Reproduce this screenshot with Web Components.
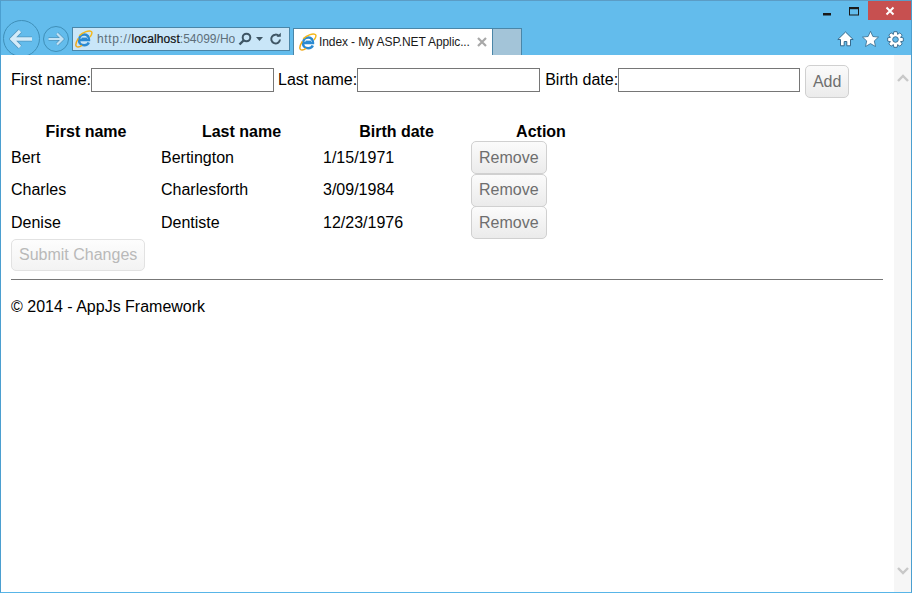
<!DOCTYPE html>
<html>
<head>
<meta charset="utf-8">
<title>Index - My ASP.NET Application</title>
<style>
    html, body { margin: 0; height: 100%; overflow: hidden; }
</style>
</head>
<body>
<ie-window>
    <app-form></app-form>
    <person-table></person-table>
    <app-button disabled>Submit Changes</app-button>
    <app-footer>© 2014 - AppJs Framework</app-footer>
</ie-window>

<script>
const IE_LOGO = `
<svg width="18" height="18" viewBox="0 0 18 18">
    <path d="M5 10h9c.3-3.200-1.700-5.400-4.600-5.400C6.300 4.600 4 7 4 10.200c0 3 2.200 5.100 5.300 5.100 2.200 0 3.800-1 4.500-2.700" fill="none" stroke="#2b8ad2" stroke-width="2.500"/>
    <path d="M6.500 8.300h5.500" stroke="#2b8ad2" stroke-width="1.400"/>
    <path d="M4.200 5.800C8.200 1.800 14.300 0 16.300 1.500c1.400 1.100-.1 3.900-1.300 5.500" fill="none" stroke="#f4b81c" stroke-width="1.500"/>
    <path d="M3.300 8.300C1.200 11.800.2 15.300 1.500 16.500c1.200 1 3.600.3 5.600-1.100" fill="none" stroke="#f0a818" stroke-width="1.500"/>
</svg>`;

// 8 tooth gear for the tools button
function gearPath(cx, cy, outer, inner) {
    let d = '';
    for (let i = 0; i < 8; i++) {
        const a = i * Math.PI / 4;
        const pts = [[-0.42, inner], [-0.2, outer], [0.2, outer], [0.42, inner]];
        pts.forEach(p => {
            const x = cx + p[1] * Math.sin(a + p[0]);
            const y = cy - p[1] * Math.cos(a + p[0]);
            d += (d ? 'L' : 'M') + x.toFixed(2) + ' ' + y.toFixed(2);
        });
    }
    return d + 'Z';
}

class IeWindow extends HTMLElement {
    constructor() {
        super();
        this.attachShadow({ mode: 'open' });
        this.shadowRoot.innerHTML = `
        <style>
            :host {
                display: flex;
                flex-direction: column;
                box-sizing: border-box;
                width: 912px;
                height: 593px;
                border: 1px solid #4b9fd0;
                border-top-color: #5b9cc5;
                border-bottom-color: #58b5e8;
                background: #fff;
                color: #000;
                font: 16px "Liberation Sans", Arial, sans-serif;
            }
            .main {
                flex: 1;
                display: flex;
                min-height: 0;
            }
            .page {
                flex: 1;
                padding: 10px 11px 0 10px;
            }
            .scrollbar {
                width: 17px;
                background: #f6f6f6;
                display: flex;
                flex-direction: column;
                justify-content: space-between;
                align-items: center;
                padding: 19px 0 17px;
                box-sizing: border-box;
            }
        </style>
        <ie-chrome></ie-chrome>
        <div class="main">
            <div class="page"><slot></slot></div>
            <div class="scrollbar">
                <svg width="12" height="8" viewBox="0 0 12 8"><path d="M1 7l5-5 5 5" fill="none" stroke="#c8c8c8" stroke-width="2.400"/></svg>
                <svg width="12" height="8" viewBox="0 0 12 8"><path d="M1 1l5 5 5-5" fill="none" stroke="#c8c8c8" stroke-width="2.400"/></svg>
            </div>
        </div>`;
    }
}

class IeChrome extends HTMLElement {
    constructor() {
        super();
        this.attachShadow({ mode: 'open' });
        this.shadowRoot.innerHTML = `
        <style>
            :host {
                display: flex;
                flex-direction: column;
                flex: none;
                height: 54px;
                overflow: hidden;
                background: #63bcec;
                font: 12px "Liberation Sans", Arial, sans-serif;
            }
            .captions {
                display: flex;
                justify-content: flex-end;
                height: 20px;
                flex: none;
            }
            .captions div {
                display: flex;
                align-items: center;
                justify-content: center;
            }
            .min { width: 27px; }
            .max { width: 27px; }
            .close { width: 43px; background: #c75050; height: 19px; }
            .bar {
                flex: 1;
                display: flex;
                align-items: flex-end;
                padding-left: 2px;
                min-height: 0;
            }
            .nav {
                display: flex;
                align-items: center;
                align-self: flex-start;
                height: 37px;
                margin-top: -1px;
            }
            .round {
                display: flex;
                align-items: center;
                justify-content: center;
                box-sizing: border-box;
                flex: none;
                border: 1px solid #3f8fb8;
                border-radius: 50%;
            }
            .back { width: 37px; height: 37px; margin-right: 3px; }
            .fwd { width: 26px; height: 26px; margin-right: 2px; }
            .address {
                box-sizing: border-box;
                display: flex;
                align-items: center;
                width: 218px;
                height: 24px;
                margin: 0 3px 4px 1px;
                padding: 0 4px 0 2px;
                background: #c9e6f8;
                border: 1px solid #4a86a8;
                color: #5d6f7a;
                font-size: 12px;
                white-space: nowrap;
            }
            .address b { color: #111; font-weight: normal; -webkit-text-stroke: .2px #111; letter-spacing: .1px; }
            .url { margin-left: 4px; width: 138px; overflow: hidden; }
            .url i { font-style: normal; letter-spacing: .65px; }
            .address svg { flex: none; }
            .tab {
                box-sizing: border-box;
                display: flex;
                align-items: center;
                width: 200px;
                height: 27px;
                padding: 0 5px 0 5px;
                background: #fff;
                border: 1px solid #4a86a8;
                border-bottom: 0;
                color: #1a1a1a;
                white-space: nowrap;
            }
            .tab span { flex: 1; margin-left: 2px; letter-spacing: -.1px; }
            .newtab {
                box-sizing: border-box;
                width: 29px;
                height: 27px;
                background: #a3c4d8;
                border: 1px solid #4a86a8;
                border-left: 0;
                border-bottom: 0;
            }
            .tools {
                margin-left: auto;
                display: flex;
                align-items: center;
                gap: 8px;
                height: 28px;
                padding-right: 7px;
                margin-bottom: 2px;
            }
        </style>
        <div class="captions">
            <div class="min"><svg width="9" height="9" viewBox="0 0 9 9"><rect x="0" y="6" width="8" height="2.500" fill="#1a1a1a"/></svg></div>
            <div class="max"><svg width="11" height="9" viewBox="0 0 11 9"><rect x=".5" y=".5" width="9" height="7.500" fill="none" stroke="#1a1a1a"/><rect x="0" y="0" width="10" height="2.200" fill="#1a1a1a"/></svg></div>
            <div class="close"><svg width="10" height="10" viewBox="0 0 10 10"><path d="M1.500 1.500l7 7M8.500 1.500l-7 7" stroke="#fff" stroke-width="2"/></svg></div>
        </div>
        <div class="bar">
            <div class="nav">
                <div class="round back">
                    <svg width="26" height="22" viewBox="0 0 26 22">
                        <path d="M11 3l-8 8 8 8M4 11h19" fill="none" stroke="#4f94bd" stroke-width="5"/>
                        <path d="M11 3l-8 8 8 8M4 11h19" fill="none" stroke="#d3ebf9" stroke-width="3.400"/>
                    </svg>
                </div>
                <div class="round fwd">
                    <svg width="18" height="14" viewBox="0 0 18 14">
                        <path d="M10 1.500l5.500 5.500-5.500 5.500M15 7H1.500" fill="none" stroke="#4f94bd" stroke-width="3.400"/>
                        <path d="M10 1.500l5.500 5.500-5.500 5.500M15 7H1.500" fill="none" stroke="#c2e2f5" stroke-width="2.200"/>
                    </svg>
                </div>
            </div>
            <div class="address">
                ${IE_LOGO}
                <div class="url"><i>http://</i><b>localhost</b>:54099/Ho</div>
                <svg width="14" height="14" viewBox="0 0 14 14" style="margin-left:3px"><circle cx="8.500" cy="5.500" r="3.800" fill="none" stroke="#3f5665" stroke-width="2"/><path d="M5.500 8.500L1.500 12.500" stroke="#3f5665" stroke-width="2.400"/></svg>
                <svg width="8" height="5" viewBox="0 0 8 5" style="margin-left:4px"><path d="M0 0h7L3.500 4z" fill="#3f5665"/></svg>
                <svg width="13" height="14" viewBox="0 0 13 14" style="margin-left:5px"><path d="M10 4.200A4.400 4.400 0 1 0 11 7.500" fill="none" stroke="#3f5665" stroke-width="2"/><path d="M7.500 4.800h4.300V.8z" fill="#3f5665"/></svg>
            </div>
            <div class="tab">
                ${IE_LOGO}
                <span>Index - My ASP.NET Applic...</span>
                <svg width="10" height="10" viewBox="0 0 10 10"><path d="M1 1l8 8M9 1l-8 8" stroke="#a8a8a8" stroke-width="2.200"/></svg>
            </div>
            <div class="newtab"></div>
            <div class="tools">
                <svg width="17" height="16" viewBox="0 0 17 16"><path d="M8.500 1L.8 8.500h2.700v6.300h3.700v-4.300h2.600v4.300h3.700V8.500h2.700z" fill="#fff" stroke="#35698c" stroke-width="1"/></svg>
                <svg width="17" height="16" viewBox="0 0 17 16"><path d="M8.500 .3l2.400 5.200 5.600.6-4.200 3.800 1.200 5.600-5-2.900-5 2.900 1.200-5.600L.5 6.100l5.600-.6z" fill="#fff" stroke="#35698c" stroke-width=".8"/></svg>
                <svg width="17" height="17" viewBox="0 0 17 17"><path d="${gearPath(8.5, 8.5, 8, 5.6)}" fill="#fff" stroke="#35698c" stroke-width=".9"/><circle cx="8.500" cy="8.500" r="2.800" fill="#63bcec" stroke="#35698c" stroke-width=".9"/></svg>
            </div>
        </div>`;
    }
}

class AppButton extends HTMLElement {
    constructor() {
        super();
        this.attachShadow({ mode: 'open' });
        this.shadowRoot.innerHTML = `
        <style>
            :host {
                display: inline-flex;
                box-sizing: border-box;
                align-items: center;
                justify-content: center;
                height: 33px;
                padding: 0 7px;
                border: 1px solid #d0d0d0;
                border-radius: 5px;
                background: linear-gradient(#fbfbfb, #ebebeb);
                color: #6e6e6e;
                font: 16px "Liberation Sans", Arial, sans-serif;
                vertical-align: top;
            }
            :host([disabled]) {
                height: 32px;
                border-color: #e2e2e2;
                background: linear-gradient(#fdfdfd, #f3f3f3);
                color: #b9b9b9;
            }
        </style>
        <slot></slot>`;
    }
}

class AppForm extends HTMLElement {
    constructor() {
        super();
        this.attachShadow({ mode: 'open' });
        this.shadowRoot.innerHTML = `
        <style>
            :host {
                display: flex;
                align-items: center;
                height: 33px;
            }
            .f {
                box-sizing: border-box;
                width: 183px;
                height: 24px;
                margin: -3px 4px 0 0;
                padding: 0;
                border: 1px solid #767676;
                background: #fff;
            }
            label { margin-top: -3px; white-space: nowrap; }
            .f.l { margin-right: 5px; }
            .f.d { width: 182px; margin-right: 5px; }
            app-button { width: 44px; padding: 0; }
        </style>
        <label>First name:</label><input class="f">
        <label>Last name:</label><input class="f l">
        <label>Birth date:</label><input class="f d">
        <app-button>Add</app-button>`;
    }
}

class PersonTable extends HTMLElement {
    constructor() {
        super();
        this.attachShadow({ mode: 'open' });
        const people = [
            ['Bert', 'Bertington', '1/15/1971'],
            ['Charles', 'Charlesforth', '3/09/1984'],
            ['Denise', 'Dentiste', '12/23/1976']
        ];
        let rows = '';
        people.forEach(p => {
            rows += `<div class="c">${p[0]}</div><div class="c">${p[1]}</div><div class="c">${p[2]}</div>
                <div class="c"><app-button>Remove</app-button></div>`;
        });
        this.shadowRoot.innerHTML = `
        <style>
            :host {
                display: grid;
                grid-template-columns: 150px 162px 148px 140px;
                grid-template-rows: 18.400px repeat(3, 32.600px);
                margin-top: 25px;
                width: 600px;
            }
            .h { font-weight: bold; text-align: center; white-space: nowrap; }
            .h.s { margin-left: -1px; }
            .c { display: flex; align-items: center; }
        </style>
        <div class="h">First name</div><div class="h s">Last name</div><div class="h s">Birth date</div><div class="h">Action</div>
        ${rows}`;
    }
}

class AppFooter extends HTMLElement {
    constructor() {
        super();
        this.attachShadow({ mode: 'open' });
        this.shadowRoot.innerHTML = `
        <style>
            :host { display: block; }
            hr { margin: 8px 0 18px; border: 0; border-top: 1px solid #777; height: 0; }
        </style>
        <hr>
        <slot></slot>`;
    }
}

customElements.define('ie-window', IeWindow);
customElements.define('ie-chrome', IeChrome);
customElements.define('app-button', AppButton);
customElements.define('app-form', AppForm);
customElements.define('person-table', PersonTable);
customElements.define('app-footer', AppFooter);
</script>
</body>
</html>
